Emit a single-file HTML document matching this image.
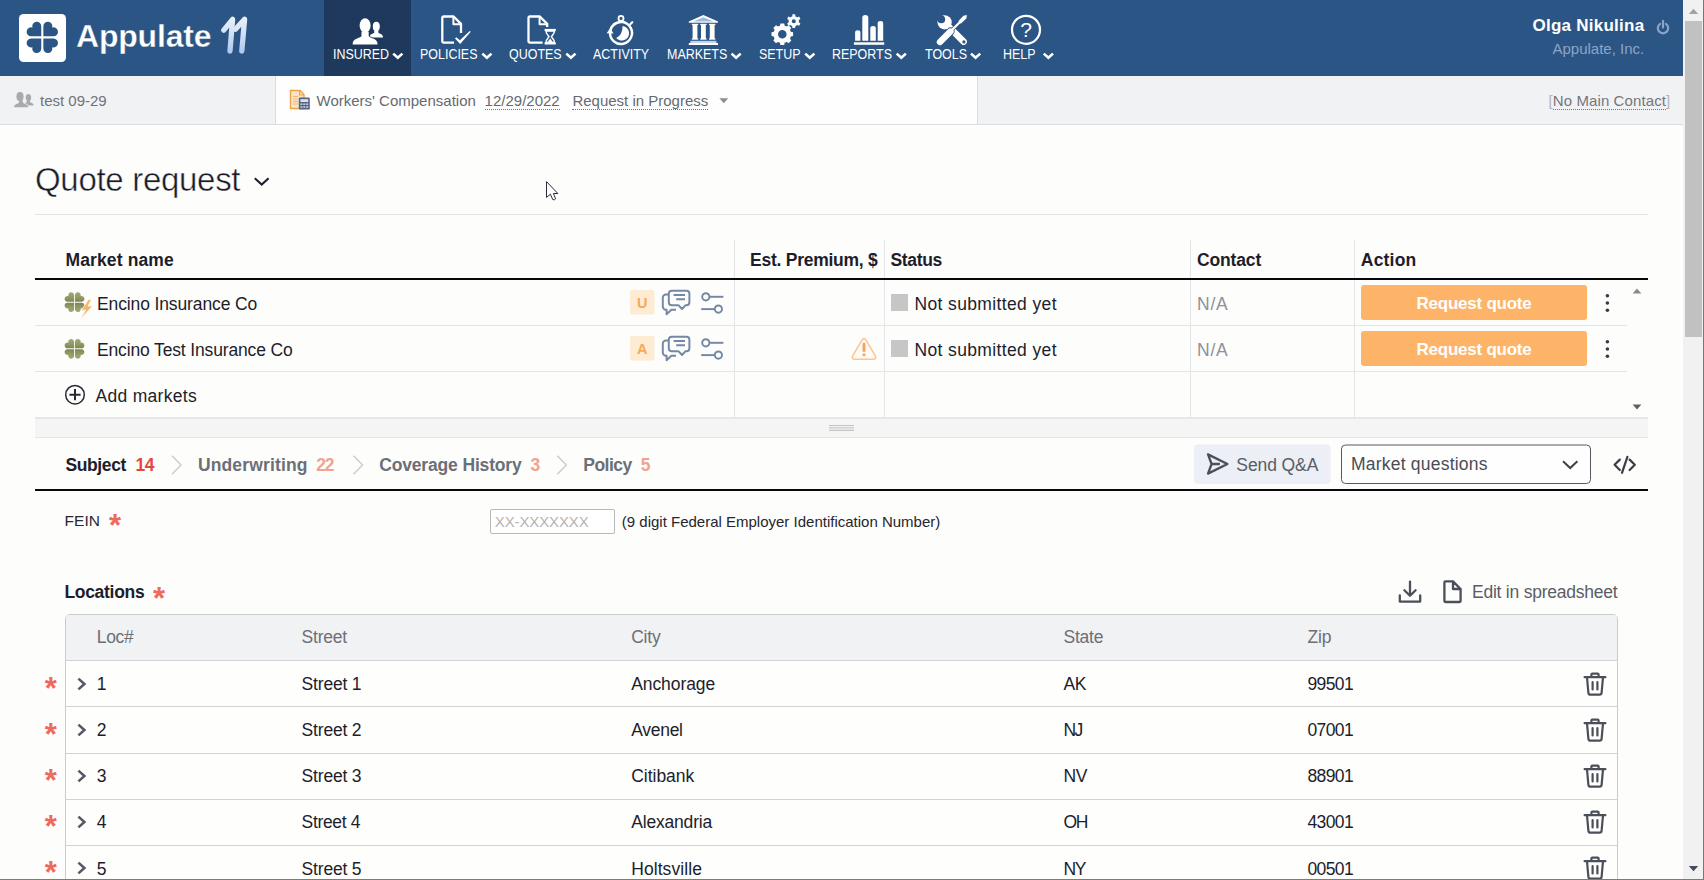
<!DOCTYPE html>
<html>
<head>
<meta charset="utf-8">
<title>Quote request</title>
<style>
html,body{margin:0;padding:0;}
body{width:1704px;height:880px;overflow:hidden;position:relative;background:#fdfdfc;font-family:"Liberation Sans",sans-serif;color:#1d1d2b;font-size:17px;}
.a{position:absolute;}
.t{position:absolute;white-space:nowrap;line-height:20px;font-size:17.5px;}
.b{font-weight:700;}
.hl{position:absolute;height:1px;background:#e3e5e9;}
.vl{position:absolute;width:1px;background:#e3e5e9;}
svg{position:absolute;overflow:visible;}
/* nav */
#nav{left:0;top:0;width:1683px;height:76px;background:#2b5585;}
#navact{left:324px;top:0;width:87px;height:76px;background:#1e395c;}
.nl{position:absolute;top:45px;line-height:18px;font-size:14px;color:#fff;white-space:nowrap;transform-origin:0 0;transform:scaleX(.89);}
/* sub bar */
#sub{left:0;top:76px;width:1683px;height:48px;background:#f1f2f4;border-bottom:1px solid #dcdde0;}
#subw{left:275px;top:76px;width:703px;height:48px;background:#fefefe;border-left:1px solid #dcdde0;border-right:1px solid #dcdde0;box-sizing:border-box;}
.st{position:absolute;white-space:nowrap;line-height:18px;font-size:15px;color:#666a70;top:92px;}
.dot{border-bottom:1px dotted #777;}
.btn{left:1361px;width:226px;height:35px;border-radius:3px;background:#fdb469;color:#fff;font-weight:700;font-size:17px;line-height:37px;text-align:center;letter-spacing:-.23px;}
.ast{font-size:31px;line-height:30px;font-weight:700;color:#ee6a5a;font-family:"Liberation Sans",sans-serif;}
.th{color:#6c6f76;}
/* scrollbar */
#sb{left:1683px;top:0;width:21px;height:880px;background:#f1f1f1;}
#sbt{left:1685px;top:21px;width:17px;height:316px;background:#c1c1c1;}
</style>
</head>
<body>
<!-- NAV -->
<div class="a" id="nav"></div>
<div class="a" id="navact"></div>
<!-- logo -->
<div class="a" style="left:19px;top:14px;width:46.5px;height:47.5px;background:#fff;border-radius:4.5px"></div>
<svg style="left:0;top:0" width="330" height="76">
<g transform="translate(42.3,37.4)" fill="#2b5585">
<path id="hq" d="M-1.050 -1.050V-11.200A4.500 4.500 0 1 0 -9.850 -9.850A4.500 4.500 0 1 0 -11.200 -1.050Z"/>
<use href="#hq" transform="scale(-1,1)"/><use href="#hq" transform="scale(1,-1)"/><use href="#hq" transform="scale(-1,-1)"/>
</g>
<defs><linearGradient id="g11" x1="0" y1="0" x2="0" y2="1"><stop offset="0" stop-color="#e6edf8"/><stop offset="0.400" stop-color="#d6e2f5"/><stop offset="1" stop-color="#b0caef"/></linearGradient></defs>
<g fill="none" stroke="url(#g11)" stroke-width="5.300" stroke-linecap="round" stroke-linejoin="round">
<path d="M223.8 30.2L232.6 19.3L230 51"/>
<path d="M235.5 29.2L244.6 19.3L241.8 51"/>
</g>
</svg>
<div class="a" style="left:76px;top:17px;font-size:32px;line-height:38px;font-weight:700;color:#fff;letter-spacing:-0.2px;white-space:nowrap;-webkit-text-stroke:.35px #2b5585">Appulate</div>

<svg style="left:0;top:0" width="1683" height="76" fill="#fff">
<!-- INSURED: two people -->
<g>
<ellipse cx="376.3" cy="26.4" rx="3.5" ry="4.6"/>
<path d="M369.6 37.4c0-3.2 3-3.4 4.6-4.6v-2.5h4.2v2.5c1.6 1.2 4.6 1.4 4.6 4.6z"/>
<g stroke="#1e395c" stroke-width="1.4"><ellipse cx="365.1" cy="25.6" rx="5.7" ry="7.4"/>
<path d="M352.6 44.6c0-6.2 5.6-5.600 8.900-8.300v-4.600h7.200v4.600c3.300 2.700 8.900 2.100 8.900 8.300z"/></g>
<ellipse cx="365.1" cy="25.6" rx="5.5" ry="7.300"/>
<path d="M352.6 44.6c0-6.2 5.6-5.600 8.900-8.300v-4.600h7.200v4.600c3.300 2.700 8.900 2.100 8.900 8.300z"/>
</g>
<!-- POLICIES: doc + check -->
<g fill="none" stroke="#fff" stroke-width="2.3" stroke-linejoin="round">
<path d="M454 42.6H443.6a1.3 1.3 0 0 1 -1.3 -1.3V17.8a1.3 1.3 0 0 1 1.3 -1.3H453.6L461 23.9V33"/>
<path d="M453.4 16.8V24.2H461" stroke-width="2"/>
</g>
<path d="M455 38.6l1.4-1.3 3.4 3 10-9.3 1 .8-10.6 12.3z"/>
<!-- QUOTES: doc + hourglass -->
<g fill="none" stroke="#fff" stroke-width="2.3" stroke-linejoin="round">
<path d="M542.6 42.6H529.8a1.3 1.3 0 0 1 -1.3 -1.3V17.8a1.3 1.3 0 0 1 1.3 -1.3H539.8L547.2 23.9V27"/>
<path d="M539.6 16.8V24.2H547.2" stroke-width="2"/>
</g>
<g>
<rect x="544.6" y="28.9" width="11.2" height="2.2"/>
<rect x="544.6" y="42.3" width="11.2" height="2.2"/>
<path d="M546 31h8.4c0 3.2-2.4 4.4-3 5.7.6 1.3 3 2.5 3 5.7H546c0-3.2 2.4-4.4 3-5.7-.6-1.3-3-2.5-3-5.7z" fill="none" stroke="#fff" stroke-width="1.5"/>
<path d="M547.6 42l2.6-3.4 2.6 3.4z"/>
</g>
<!-- ACTIVITY: stopwatch -->
<g fill="none" stroke="#fff">
<circle cx="621" cy="18.4" r="2.5" stroke-width="1.8"/>
<path d="M621 21V22.5" stroke-width="2.4"/>
<path d="M630.2 24.3L632.3 22.2" stroke-width="2.2" stroke-linecap="round"/>
<path d="M610 32.6A11 11 0 1 0 613.6 24.8A11 11 0 0 1 627 23.6" stroke-width="2.5"/>
<path d="M610.3 33.4A11 11 0 0 1 616 23.2" stroke-width="2.5"/>
</g>
<path d="M606.6 33.2l3.6-5 3.4 5.4z"/>
<path d="M622.600 26A7.300 7.300 0 1 1 616.200 38Q622.600 35 622.600 26z"/>
<!-- MARKETS: bank -->
<g>
<path d="M703.4 15L718 21.6V22.8H688.8V21.6z"/>
<path d="M703.4 17.2L713.5 21.6H693.3z" fill="#9db9df"/>
<path d="M703.4 18.8L710 21.6H696.8z" fill="#fff" opacity=".0"/>
<rect x="691.8" y="23.8" width="6.4" height="1.3"/><rect x="692.600" y="24" width="4.800" height="15"/><rect x="691.8" y="38.4" width="6.4" height="1.3"/>
<rect x="700.2" y="23.8" width="6.4" height="1.3"/><rect x="701" y="24" width="4.800" height="15"/><rect x="700.2" y="38.4" width="6.4" height="1.3"/>
<rect x="709" y="23.8" width="6.4" height="1.3"/><rect x="709.800" y="24" width="4.800" height="15"/><rect x="709" y="38.4" width="6.4" height="1.3"/>
<rect x="690.4" y="40.8" width="26" height="2.2" fill="#c3d5ef"/>
<rect x="688.8" y="43" width="29.2" height="2"/>
</g>
<!-- SETUP: gears -->
<g id="gears">
<g transform="translate(782.3,34.2)">
<circle r="6.600" fill="none" stroke="#fff" stroke-width="4.600"/>
<g id="teeth1"><path d="M-2.400 -8L-1.900 -10.800H1.900L2.400 -8z"/><path d="M-2.400 8L-1.900 10.800H1.900L2.400 8z"/></g>
<use href="#teeth1" transform="rotate(45)"/><use href="#teeth1" transform="rotate(90)"/><use href="#teeth1" transform="rotate(135)"/>
</g>
<g transform="translate(793.8,21.2)">
<circle r="3.600" fill="none" stroke="#fff" stroke-width="3.100"/>
<g id="teeth2"><path d="M-1.700 -4.600L-1.300 -6.900H1.300L1.700 -4.600z"/><path d="M-1.700 4.600L-1.300 6.900H1.300L1.700 4.600z"/></g>
<use href="#teeth2" transform="rotate(60)"/><use href="#teeth2" transform="rotate(120)"/>
</g>
</g>
<!-- REPORTS: bars -->
<g>
<path d="M855.1 40.8V32.6a2.65 2.3 0 0 1 5.3 0V40.8z"/>
<path d="M862.3 40.8V17.6a3 2.7 0 0 1 6 0V40.8z"/>
<path d="M870.3 40.8V28.4a2.75 2.4 0 0 1 5.5 0V40.8z"/>
<path d="M877.7 40.8V23.4a2.75 2.4 0 0 1 5.5 0V40.8z"/>
<rect x="853.9" y="42.3" width="30.3" height="2.5"/>
</g>
<!-- TOOLS -->
<g>
<circle cx="944.600" cy="22.300" r="7.100"/>
<path d="M949.500 27.500L963.600 41.600" stroke="#fff" stroke-width="6.600" stroke-linecap="round"/>
<circle cx="941.300" cy="19.300" r="3.900" fill="#2b5585"/>
<path d="M941.300 19.300L934 12" stroke="#2b5585" stroke-width="6.600"/>
<circle cx="963.900" cy="41.900" r="1.600" fill="#2b5585"/>
<g stroke="#2b5585" stroke-width="1" stroke-linejoin="round">
<path d="M940 42L950.400 31.600" stroke="#2b5585" stroke-width="8" stroke-linecap="round"/>
<path d="M950 32L960 22" stroke="#2b5585" stroke-width="3.600"/>
</g>
<path d="M940 42L950.400 31.600" stroke="#fff" stroke-width="6.400" stroke-linecap="round"/>
<path d="M949.500 32.500L960.500 21.500" stroke="#fff" stroke-width="2.300"/>
<path d="M958.300 21.300L963.400 15.700L966.900 14.900L966.300 18.400L960.800 23.800z"/>
</g>
<!-- HELP -->
<circle cx="1026" cy="29.800" r="14" fill="none" stroke="#fff" stroke-width="2.200"/>
<text x="1026" y="37.400" text-anchor="middle" font-family="Liberation Sans" font-size="21" fill="#fff">?</text>
<!-- chevrons -->
<g fill="none" stroke="#fff" stroke-width="2.600">
<defs><path id="chv" d="M0 0L4.600 4.200L9.200 0"/></defs><use href="#chv" x="393.2" y="53.6"/><use href="#chv" x="482.3" y="53.6"/><use href="#chv" x="566.3" y="53.6"/><use href="#chv" x="731.5" y="53.6"/><use href="#chv" x="805.2" y="53.6"/><use href="#chv" x="896.7" y="53.6"/><use href="#chv" x="971" y="53.6"/><use href="#chv" x="1043.8" y="53.6"/>
</g>
</svg>

<div class="nl" style="left:333px">INSURED</div>
<div class="nl" style="left:420px">POLICIES</div>
<div class="nl" style="left:509px">QUOTES</div>
<div class="nl" style="left:593px">ACTIVITY</div>
<div class="nl" style="left:667px">MARKETS</div>
<div class="nl" style="left:759px">SETUP</div>
<div class="nl" style="left:832px">REPORTS</div>
<div class="nl" style="left:925px">TOOLS</div>
<div class="nl" style="left:1003px">HELP</div>
<div class="t b" style="left:1532.5px;top:16px;color:#fff;font-size:17px;letter-spacing:.25px">Olga Nikulina</div>
<div class="t" style="left:1552.5px;top:40px;font-size:15px;line-height:18px;color:#8ba4c6">Appulate, Inc.</div>
<svg style="left:1655px;top:18.500px" width="16" height="18" fill="none" stroke="#8ba4c6" stroke-width="2.200" stroke-linecap="round"><path d="M5.1 4.8A5.2 5.2 0 1 0 10.900 4.800"/><path d="M8 1.800V8.600"/></svg>

<!-- SCROLLBAR -->
<div class="a" id="sb"></div>
<div class="a" id="sbt"></div>
<!-- SUBBAR -->
<div class="a" id="sub"></div>
<div class="a" id="subw"></div>
<svg style="left:13px;top:91px" width="22" height="18" fill="#a9aaad">
<ellipse cx="15.400" cy="6.600" rx="2.700" ry="3.500"/>
<path d="M10.400 14.600c0-2.600 2.200-2.600 3.400-3.600v-1.800h3.200v1.800c1.200 1 3.600 1 3.600 3.600z"/>
<g stroke="#f1f2f4" stroke-width="1"><ellipse cx="7" cy="5.600" rx="3.700" ry="4.700"/>
<path d="M.6 16.800c0-4 3.400-3.800 5-5.400v-2.600h4.600v2.600c1.600 1.600 5.400 1.400 5.400 5.400z"/></g>
<ellipse cx="7" cy="5.600" rx="3.500" ry="4.600"/>
</svg>
<div class="st" style="left:40px;color:#6f7278">test 09-29</div>
<!-- doc icon -->
<svg style="left:289px;top:89px" width="23" height="22">
<path d="M1.500 1.500H11l4 4V19.500H1.500z" fill="#fbe3c4" stroke="#eda24c" stroke-width="1.400"/>
<path d="M10.600 1.500V6H15" fill="none" stroke="#eda24c" stroke-width="1.200"/>
<g stroke="#f1b777" stroke-width="1"><path d="M4 7.500H9M4 10H9M4 12.500H9M4 15H9"/></g>
<rect x="9.800" y="8.600" width="11" height="12" rx="1.200" fill="#56657f"/>
<rect x="11.400" y="10.200" width="7.800" height="2.800" fill="#d9e2f1"/>
<g fill="#c5cfe2"><rect x="11.400" y="14.400" width="2" height="1.600"/><rect x="14.300" y="14.400" width="2" height="1.600"/><rect x="17.200" y="14.400" width="2" height="1.600"/><rect x="11.400" y="17.200" width="2" height="1.600"/><rect x="14.300" y="17.200" width="2" height="1.600"/><rect x="17.200" y="17.200" width="2" height="1.600"/></g>
</svg>
<div class="st" style="left:316.500px">Workers' Compensation</div>
<div class="st" style="left:484.600px"><span class="dot">12/29/2022</span></div>
<div class="st" style="left:572.400px"><span class="dot">Request in Progress</span></div>
<svg style="left:719px;top:97.500px" width="10" height="6"><path d="M.4 .3H9.200L4.800 5.300z" fill="#8a8d92"/></svg>
<div class="st" style="left:1548.500px;letter-spacing:.1px"><span style="color:#b3b5b9">[</span><span class="dot" style="color:#74777c">No Main Contact</span><span style="color:#b3b5b9">]</span></div>
<!-- scrollbar arrows -->
<svg style="left:1683px;top:0" width="21" height="880" fill="#a3a3a3"><path d="M5.800 14L10.500 8.800L15.200 14z"/><path d="M5.800 866L10.500 871.200L15.200 866z" fill="#434c60"/></svg>

<!-- title -->
<div class="a" style="left:35px;top:161px;font-size:33px;line-height:38px;letter-spacing:-.3px;white-space:nowrap;color:#1c1c28;-webkit-text-stroke:.45px #fdfdfc">Quote request</div>
<svg style="left:253px;top:176px" width="18" height="12" fill="none" stroke="#1d1d2b" stroke-width="2"><path d="M1.800 2.300L8.700 8.600L15.600 2.300"/></svg>
<div class="hl" style="left:35px;top:214px;width:1613px;background:#dfe1e5"></div>
<!-- markets table -->
<div class="vl" style="left:734px;top:240px;height:178px"></div>
<div class="vl" style="left:884px;top:240px;height:178px"></div>
<div class="vl" style="left:1190px;top:240px;height:178px"></div>
<div class="vl" style="left:1354px;top:240px;height:178px"></div>
<div class="t b" style="left:65.50px;top:250px;letter-spacing:0.122px">Market name</div>
<div class="t b" style="left:750.00px;top:250px;letter-spacing:-0.248px">Est. Premium, $</div>
<div class="t b" style="left:890.500px;top:250px;letter-spacing:-0.350px">Status</div>
<div class="t b" style="left:1196.900px;top:250px;letter-spacing:-0.132px">Contact</div>
<div class="t b" style="left:1360.800px;top:250px;letter-spacing:0.200px">Action</div>
<div class="a" style="left:35px;top:278px;width:1613px;height:2px;background:#08080c"></div>
<div class="hl" style="left:35px;top:325px;width:1592px"></div>
<div class="hl" style="left:35px;top:371px;width:1592px"></div>
<div class="hl" style="left:35px;top:417px;width:1613px;height:2px;background:#e6e7ea"></div>
<div class="a" style="left:35px;top:419px;width:1613px;height:18px;background:#f5f5f5"></div><div class="hl" style="left:35px;top:437px;width:1613px;background:#e4e5e8"></div>
<div class="a" style="left:829px;top:425px;width:25px;height:1px;background:#c4c4c6"></div>
<div class="a" style="left:829px;top:427px;width:25px;height:1px;background:#cfcfd1"></div>
<div class="a" style="left:829px;top:428px;width:25px;height:2px;background:#e3e3e3"></div>
<div class="a" style="left:829px;top:430px;width:25px;height:1px;background:#c6c6c8"></div>
<!-- row text -->
<div class="t" style="left:97.00px;top:294px;letter-spacing:-0.122px">Encino Insurance Co</div>
<div class="t" style="left:97.00px;top:340px;letter-spacing:-0.146px">Encino Test Insurance Co</div>
<div class="t" style="left:95.50px;top:386px;letter-spacing:0.294px">Add markets</div>
<div class="t" style="left:914.500px;top:294px;letter-spacing:0.366px">Not submitted yet</div>
<div class="t" style="left:914.500px;top:340px;letter-spacing:0.366px">Not submitted yet</div>
<div class="a" style="left:891px;top:294px;width:17px;height:17px;background:#c6c6c6"></div>
<div class="a" style="left:891px;top:340px;width:17px;height:17px;background:#c6c6c6"></div>
<div class="t" style="left:1197.00px;top:294px;color:#8e9197;letter-spacing:0.750px">N/A</div>
<div class="t" style="left:1197.00px;top:340px;color:#8e9197;letter-spacing:0.750px">N/A</div>
<div class="a btn" style="top:285px">Request quote</div>
<div class="a btn" style="top:331px">Request quote</div>
<svg style="left:0;top:280px" width="1683" height="140">
<defs>
<linearGradient id="gcl" x1="0" y1="0" x2="0" y2="1"><stop offset="0" stop-color="#a3a878"/><stop offset=".5" stop-color="#959b66"/><stop offset="1" stop-color="#7f854e"/></linearGradient>
<path id="hq2" d="M-.700 -.700V-11.200A4.700 4.700 0 1 0 -9.900 -9.900A4.700 4.700 0 1 0 -11.200 -.700Z"/><g id="clv"><g transform="translate(74.500,22.200) scale(.62)"><use href="#hq2"/><use href="#hq2" transform="scale(-1,1)"/><use href="#hq2" transform="scale(1,-1)"/><use href="#hq2" transform="scale(-1,-1)"/></g></g>
<g id="chat" fill="none" stroke="#7488a5" stroke-width="1.950" stroke-linejoin="round">
<path d="M668.400 14.400H666a3.200 3.200 0 0 0 -3.200 3.200V26.600a3.200 3.200 0 0 0 3.200 3.200H666.600V34.200L671.400 29.800H676"/>
<path d="M671.800 10.800H686.400a3 3 0 0 1 3 3V22.200a3 3 0 0 1 -3 3H685.600L682 29L678.400 25.200H671.800a3 3 0 0 1 -3 -3V13.800a3 3 0 0 1 3 -3z"/>
<path d="M673.600 15H685M676.200 19.200H685"/>
</g>
<g id="sld" fill="none" stroke="#7488a5" stroke-width="1.950">
<circle cx="705.800" cy="16.800" r="3.600"/><path d="M709.600 16.800H723.400"/>
<circle cx="718.400" cy="29.100" r="3.600"/><path d="M701.200 29.100H714.600"/>
</g>
<g id="dots" fill="#3a3a44"><circle cx="1607.400" cy="15.700" r="1.800"/><circle cx="1607.400" cy="23" r="1.800"/><circle cx="1607.400" cy="30.300" r="1.800"/></g>
</defs>
<g fill="url(#gcl)"><use href="#clv"/><use href="#clv" y="46.600"/></g>
<path d="M88.600 19.400L81.400 30.200L85.600 30.200L80.200 39.400L92.400 26.200L88 26L91.400 19.600z" fill="#f9b46b" stroke="#fdfdfc" stroke-width=".6"/>
<rect x="630" y="10" width="24.500" height="24.500" rx="2" fill="#fdebd3"/>
<rect x="630" y="56" width="24.500" height="24.500" rx="2" fill="#fdebd3"/>
<text x="642.200" y="27.500" text-anchor="middle" font-family="Liberation Sans" font-weight="700" font-size="14.500" fill="#f6a95b">U</text>
<text x="642.200" y="73.500" text-anchor="middle" font-family="Liberation Sans" font-weight="700" font-size="14.500" fill="#f6a95b">A</text>
<use href="#chat"/><use href="#chat" y="46"/>
<use href="#sld"/><use href="#sld" y="46"/>
<use href="#dots"/><use href="#dots" y="46"/>
<!-- warning -->
<path d="M862.300 59.600a2 2 0 0 1 3.400 0l9.800 16.600a2 2 0 0 1 -1.700 3H854.200a2 2 0 0 1 -1.700 -3z" fill="#fffaf3" stroke="#f8c595" stroke-width="1.500"/>
<path d="M864 64V70.600" stroke="#f5a65e" stroke-width="3" stroke-linecap="round"/>
<circle cx="864" cy="74.700" r="1.500" fill="#f5a65e"/>
<!-- plus circle -->
<circle cx="75" cy="114.700" r="9.300" fill="none" stroke="#2a2a34" stroke-width="1.500"/>
<path d="M69.400 114.700H80.600M75 109.100V120.300" stroke="#2a2a34" stroke-width="2"/>
<!-- inner scroll arrows -->
<path d="M1632.600 13.400L1637 8.600L1641.400 13.400z" fill="#8a8a8a"/>
<path d="M1632.600 124.600L1637 129.400L1641.400 124.600z" fill="#606060"/>
</svg>



<!-- tabs -->
<div class="t b" style="left:65.40px;top:455px;letter-spacing:-0.373px">Subject</div>
<div class="t b" style="left:135.40px;top:455px;color:#e5473d;letter-spacing:-0.278px">14</div>
<div class="t b" style="left:197.90px;top:455px;color:#6c6f76;letter-spacing:0.147px">Underwriting</div>
<div class="t b" style="left:316.30px;top:455px;color:#f0a390;letter-spacing:-1.278px">22</div>
<div class="t b" style="left:379.20px;top:455px;color:#6c6f76;letter-spacing:-0.157px">Coverage History</div>
<div class="t b" style="left:530.60px;top:455px;color:#f0a390;letter-spacing:0.000px">3</div>
<div class="t b" style="left:583.30px;top:455px;color:#6c6f76;letter-spacing:-0.539px">Policy</div>
<div class="t b" style="left:640.70px;top:455px;color:#f0a390;letter-spacing:0.000px">5</div>
<svg style="left:0;top:440px" width="1683" height="50" fill="none">
<g stroke="#c9cbcf" stroke-width="1.400"><path d="M172 15.800L181 25L172 34.200"/><path d="M353.500 15.800L362.500 25L353.500 34.200"/><path d="M557.300 15.800L566.300 25L557.300 34.200"/></g>
<rect x="1194" y="4.500" width="136.500" height="39.500" rx="4" fill="#eceff5"/>
<path d="M1208 14.400L1227.400 24L1208 33.600L1211.600 24zM1211.600 24H1219" stroke="#4c4f58" stroke-width="2.300" stroke-linejoin="round" stroke-linecap="round"/>
<rect x="1341.500" y="5" width="249" height="38.500" rx="4" fill="#fefefe" stroke="#55585f" stroke-width="1"/>
<path d="M1563 21.200L1570.200 28L1577.400 21.200" stroke="#3f424a" stroke-width="2"/>
<path d="M1619.800 19.600L1614.600 24.800L1619.800 30M1629.600 19.600L1634.800 24.800L1629.600 30M1627.400 16.800L1622 32.800" stroke="#3b3e46" stroke-width="2.200" stroke-linecap="round" stroke-linejoin="round"/>
</svg>
<div class="t" style="left:1236.30px;top:455px;color:#5a5d66;letter-spacing:-0.090px">Send Q&amp;A</div>
<div class="t" style="left:1350.900px;top:454px;color:#4a4d55;letter-spacing:0.226px">Market questions</div>
<div class="a" style="left:35px;top:489px;width:1613px;height:2px;background:#08080c"></div>
<!-- form -->
<div class="t" style="left:64.600px;top:512px;font-size:15px;line-height:18px;color:#2a2a30;font-size:15.5px">FEIN</div>
<div class="a ast" style="left:109px;top:511px">*</div>
<div class="a" style="left:490px;top:509px;width:125px;height:25px;box-sizing:border-box;border:1px solid #b9b9b9;border-radius:2px;background:#fff"></div>
<div class="t" style="left:494.800px;top:513px;font-size:15px;line-height:18px;color:#b4b4b4;letter-spacing:-.12px">XX-XXXXXXX</div>
<div class="t" style="left:621.800px;top:513px;font-size:15px;line-height:18px;color:#26262c">(9 digit Federal Employer Identification Number)</div>


<!-- locations -->
<div class="t b" style="left:64.400px;top:581.500px;letter-spacing:-0.295px">Locations</div>
<div class="a ast" style="left:153px;top:584px">*</div>
<svg style="left:1395px;top:576px" width="75" height="32" fill="none" stroke="#4b4f59" stroke-width="2.300" stroke-linecap="round" stroke-linejoin="round">
<path d="M15 5.600V19.600M9.400 14.200L15 19.800L20.600 14.200M4.800 19.400V25.600H25.200V19.400"/>
<path d="M58 5.400H50.400a1 1 0 0 0 -1 1V25a1 1 0 0 0 1 1H64.600a1 1 0 0 0 1 -1V13zM58 5.400V13H65.600"/>
</svg>
<div class="t" style="left:1472.00px;top:582px;color:#5a5d66;letter-spacing:-0.230px">Edit in spreadsheet</div>
<div class="a" style="left:65px;top:614px;width:1553px;height:280px;box-sizing:border-box;border:1px solid #c9cbcf;border-radius:5px 5px 0 0;background:#fefefd"></div>
<div class="a" style="left:66px;top:615px;width:1551px;height:45px;background:#f1f2f4;border-radius:3px 3px 0 0"></div>
<div class="hl" style="left:66px;top:660px;width:1551px;background:#d2d3d7"></div>
<div class="hl" style="left:66px;top:706px;width:1551px;background:#d2d3d7"></div>
<div class="hl" style="left:66px;top:753px;width:1551px;background:#d2d3d7"></div>
<div class="hl" style="left:66px;top:799px;width:1551px;background:#d2d3d7"></div>
<div class="hl" style="left:66px;top:845px;width:1551px;background:#d2d3d7"></div>
<div class="t th" style="left:96.70px;top:626.500px;letter-spacing:-0.269px">Loc#</div>
<div class="t th" style="left:301.60px;top:626.500px;letter-spacing:-0.239px">Street</div>
<div class="t th" style="left:631.20px;top:626.500px;letter-spacing:-0.204px">City</div>
<div class="t th" style="left:1063.50px;top:626.500px;letter-spacing:-0.222px">State</div>
<div class="t th" style="left:1307.50px;top:626.500px;letter-spacing:-0.208px">Zip</div>
<div class="a ast" style="left:44.7px;top:673.5px">*</div><svg style="left:76px;top:676px" width="12" height="16" fill="none" stroke="#565a67" stroke-width="2.600"><path d="M2.400 2.600L8.400 8L2.400 13.400"/></svg><div class="t" style="left:96.80px;top:674px;letter-spacing:0.000px">1</div><div class="t" style="left:301.60px;top:674px;letter-spacing:-0.190px">Street 1</div><div class="t" style="left:631.20px;top:674px;letter-spacing:-0.078px">Anchorage</div><div class="t" style="left:1063.50px;top:674px;letter-spacing:-0.333px">AK</div><div class="t" style="left:1307.50px;top:674px;letter-spacing:-0.608px">99501</div><svg style="left:1582px;top:671px" width="26" height="26" fill="none" stroke="#4b4f59" stroke-width="2.200" stroke-linecap="round" stroke-linejoin="round"><path d="M2.600 6.200H23.400M9.400 6V3.600a1 1 0 0 1 1 -1H15.600a1 1 0 0 1 1 1V6M5 6.400L6.400 21.800a2 2 0 0 0 2 1.800H17.600a2 2 0 0 0 2 -1.800L21 6.400M10.600 11.200V18.400M15.400 11.200V18.400"/></svg>
<div class="a ast" style="left:44.7px;top:719.5px">*</div><svg style="left:76px;top:722px" width="12" height="16" fill="none" stroke="#565a67" stroke-width="2.600"><path d="M2.400 2.600L8.400 8L2.400 13.400"/></svg><div class="t" style="left:96.80px;top:720px;letter-spacing:0.000px">2</div><div class="t" style="left:301.60px;top:720px;letter-spacing:-0.190px">Street 2</div><div class="t" style="left:631.20px;top:720px;letter-spacing:-0.282px">Avenel</div><div class="t" style="left:1063.50px;top:720px;letter-spacing:-1.561px">NJ</div><div class="t" style="left:1307.50px;top:720px;letter-spacing:-0.608px">07001</div><svg style="left:1582px;top:717px" width="26" height="26" fill="none" stroke="#4b4f59" stroke-width="2.200" stroke-linecap="round" stroke-linejoin="round"><path d="M2.600 6.200H23.400M9.400 6V3.600a1 1 0 0 1 1 -1H15.600a1 1 0 0 1 1 1V6M5 6.400L6.400 21.800a2 2 0 0 0 2 1.800H17.600a2 2 0 0 0 2 -1.800L21 6.400M10.600 11.200V18.400M15.400 11.200V18.400"/></svg>
<div class="a ast" style="left:44.7px;top:765.5px">*</div><svg style="left:76px;top:768px" width="12" height="16" fill="none" stroke="#565a67" stroke-width="2.600"><path d="M2.400 2.600L8.400 8L2.400 13.400"/></svg><div class="t" style="left:96.80px;top:766px;letter-spacing:0.000px">3</div><div class="t" style="left:301.60px;top:766px;letter-spacing:-0.190px">Street 3</div><div class="t" style="left:631.20px;top:766px;letter-spacing:-0.022px">Citibank</div><div class="t" style="left:1063.50px;top:766px;letter-spacing:-0.361px">NV</div><div class="t" style="left:1307.50px;top:766px;letter-spacing:-0.608px">88901</div><svg style="left:1582px;top:763px" width="26" height="26" fill="none" stroke="#4b4f59" stroke-width="2.200" stroke-linecap="round" stroke-linejoin="round"><path d="M2.600 6.200H23.400M9.400 6V3.600a1 1 0 0 1 1 -1H15.600a1 1 0 0 1 1 1V6M5 6.400L6.400 21.800a2 2 0 0 0 2 1.800H17.600a2 2 0 0 0 2 -1.800L21 6.400M10.600 11.200V18.400M15.400 11.200V18.400"/></svg>
<div class="a ast" style="left:44.7px;top:811.5px">*</div><svg style="left:76px;top:814px" width="12" height="16" fill="none" stroke="#565a67" stroke-width="2.600"><path d="M2.400 2.600L8.400 8L2.400 13.400"/></svg><div class="t" style="left:96.80px;top:812px;letter-spacing:0.000px">4</div><div class="t" style="left:301.60px;top:812px;letter-spacing:-0.333px">Street 4</div><div class="t" style="left:631.20px;top:812px;letter-spacing:-0.182px">Alexandria</div><div class="t" style="left:1063.50px;top:812px;letter-spacing:-1.389px">OH</div><div class="t" style="left:1307.50px;top:812px;letter-spacing:-0.608px">43001</div><svg style="left:1582px;top:809px" width="26" height="26" fill="none" stroke="#4b4f59" stroke-width="2.200" stroke-linecap="round" stroke-linejoin="round"><path d="M2.600 6.200H23.400M9.400 6V3.600a1 1 0 0 1 1 -1H15.600a1 1 0 0 1 1 1V6M5 6.400L6.400 21.800a2 2 0 0 0 2 1.800H17.600a2 2 0 0 0 2 -1.800L21 6.400M10.600 11.200V18.400M15.400 11.200V18.400"/></svg>
<div class="a ast" style="left:44.7px;top:857.5px">*</div><svg style="left:76px;top:860px" width="12" height="16" fill="none" stroke="#565a67" stroke-width="2.600"><path d="M2.400 2.600L8.400 8L2.400 13.400"/></svg><div class="t" style="left:96.80px;top:858.500px;letter-spacing:0.000px">5</div><div class="t" style="left:301.60px;top:858.500px;letter-spacing:-0.190px">Street 5</div><div class="t" style="left:631.20px;top:858.500px;letter-spacing:0.079px">Holtsville</div><div class="t" style="left:1063.50px;top:858.500px;letter-spacing:-1.361px">NY</div><div class="t" style="left:1307.50px;top:858.500px;letter-spacing:-0.608px">00501</div><svg style="left:1582px;top:855px" width="26" height="26" fill="none" stroke="#4b4f59" stroke-width="2.200" stroke-linecap="round" stroke-linejoin="round"><path d="M2.600 6.200H23.400M9.400 6V3.600a1 1 0 0 1 1 -1H15.600a1 1 0 0 1 1 1V6M5 6.400L6.400 21.800a2 2 0 0 0 2 1.800H17.600a2 2 0 0 0 2 -1.800L21 6.400M10.600 11.200V18.400M15.400 11.200V18.400"/></svg>

<div class="a" style="left:0;top:879px;width:1704px;height:1px;background:#7c7c7c"></div>
<div class="a" style="left:1703px;top:0;width:1px;height:880px;background:#767676"></div>
<!-- cursor -->
<svg style="left:545px;top:180px" width="16" height="22"><path d="M1.500 1.600V17.400L5.400 14.200L7.800 19.600Q9.400 20.400 10.600 18.800L8.400 13.500H12.800z" fill="#fff" stroke="#1c2030" stroke-width=".950" stroke-linejoin="round"/></svg>

</body>
</html>
